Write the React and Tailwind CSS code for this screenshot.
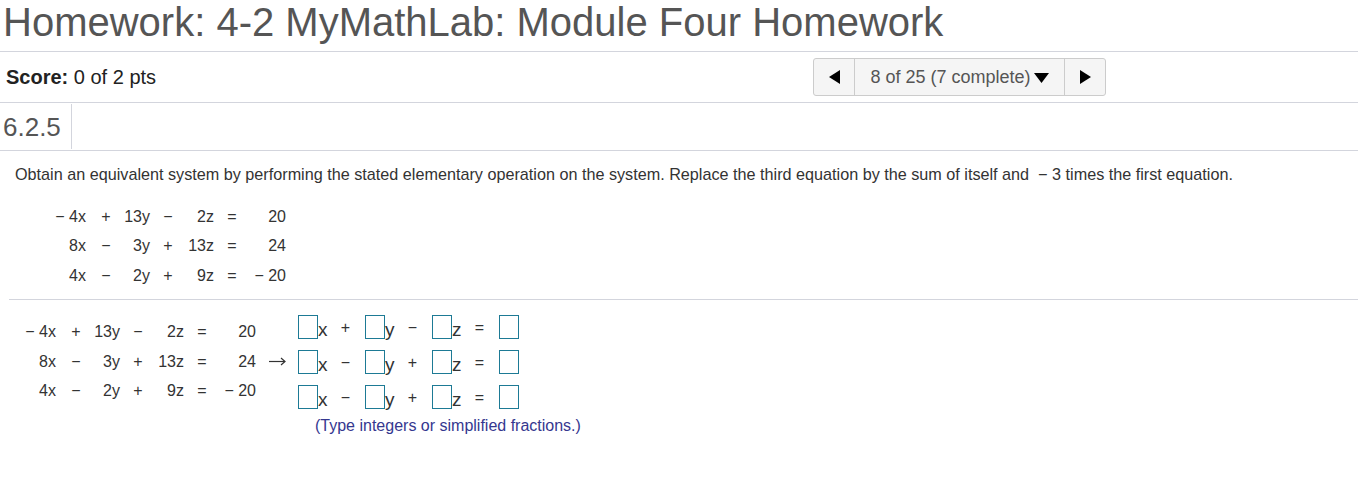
import React from "react";

const font = { fontFamily: '"Liberation Sans", Arial, sans-serif' };

const system = [
  ["− 4x", "+", "13y", "−", "2z", "=", "20"],
  ["8x", "−", "3y", "+", "13z", "=", "24"],
  ["4x", "−", "2y", "+", "9z", "=", "− 20"],
];

const answers = [
  ["+", "−"],
  ["−", "+"],
  ["−", "+"],
];

function EquationGrid({ className = "" }) {
  return (
    <div
      className={`grid grid-cols-[34px_40px_24px_36px_28px_36px_36px] auto-rows-[29.5px] items-center text-[16px] leading-[18px] text-[#333] ${className}`}
    >
      {system.map((row, r) =>
        row.map((cell, c) =>
          c % 2 === 0 ? (
            <div key={`${r}-${c}`} className="flex justify-end whitespace-nowrap">
              {cell}
            </div>
          ) : (
            <div key={`${r}-${c}`} className="text-center">
              {cell}
            </div>
          )
        )
      )}
    </div>
  );
}

function Box() {
  return <span className="block h-[24px] w-[20px] shrink-0 border border-[#1d7a95] bg-white" />;
}

function AnswerRow({ ops }) {
  return (
    <div className="flex h-[24px] items-end text-[#333]">
      <Box />
      <span className="w-[8px] text-[19px] leading-none">x</span>
      <span className="w-[39px] pb-[1px] text-center text-[16px] leading-[1.2]">{ops[0]}</span>
      <Box />
      <span className="w-[8px] text-[19px] leading-none">y</span>
      <span className="w-[39px] pb-[1px] text-center text-[16px] leading-[1.2]">{ops[1]}</span>
      <Box />
      <span className="w-[8px] text-[19px] leading-none">z</span>
      <span className="w-[39px] pb-[1px] text-center text-[16px] leading-[1.2]">=</span>
      <Box />
    </div>
  );
}

function Nav() {
  return (
    <div className="ml-auto mr-[252px] flex h-[38px] w-[293px] rounded-[3px] border border-[#ccc] bg-[#f5f5f5]">
      <div className="flex w-[41px] items-center justify-center border-r border-[#ccc]">
        <svg width="11" height="14" viewBox="0 0 11 14">
          <polygon points="11,0 11,14 0,7" fill="#000" />
        </svg>
      </div>
      <div className="flex flex-1 items-center justify-center gap-[3px] text-[18px] leading-none text-[#555]">
        <span>8 of 25 (7 complete)</span>
        <svg width="15" height="10" viewBox="0 0 15 10" className="mt-[2px]">
          <polygon points="0,0 15,0 7.5,10" fill="#000" />
        </svg>
      </div>
      <div className="flex w-[41px] items-center justify-center border-l border-[#ccc]">
        <svg width="11" height="14" viewBox="0 0 11 14">
          <polygon points="0,0 0,14 11,7" fill="#000" />
        </svg>
      </div>
    </div>
  );
}

function Arrow() {
  return (
    <div className="flex w-[42px] justify-center">
      <svg width="17" height="9" viewBox="0 0 17 9" fill="none" stroke="#333" strokeWidth="1.2">
        <path d="M0 4.5 H16" />
        <path d="M12 1 L16 4.5 L12 8" />
      </svg>
    </div>
  );
}

export default function App() {
  return (
    <div className="min-h-screen bg-white" style={font}>
      <div className="flex h-[52px] items-center border-b border-[#d3d5dd] pb-[8px] pl-[3px] text-[40px] leading-none text-[#555]">
        Homework: 4-2 MyMathLab: Module Four Homework
      </div>

      <div className="flex h-[51px] items-center border-b border-[#d3d5dd] pl-[6px] text-[20px] leading-none text-[#222]">
        <span>
          <span className="font-bold">Score:</span> 0 of 2 pts
        </span>
        <Nav />
      </div>

      <div className="flex h-[48px] items-stretch border-b border-[#d3d5dd]">
        <div className="my-[1px] flex w-[72px] items-center border-r border-[#d3d5dd] pl-[3px] text-[26px] leading-none text-[#555]">
          6.2.5
        </div>
      </div>

      <div className="pl-[9px]">
        <p className="pl-[6px] pt-[14px] text-[16.2px] leading-[18px] text-[#333]">
          Obtain an equivalent system by performing the stated elementary operation on the system. Replace the third
          equation by the sum of itself and{"\u00a0 "}−{"\u00a0"}3 times the first equation.
        </p>

        <EquationGrid className="ml-[43px] mt-[19px]" />

        <div className="mt-[8px] h-px bg-[#d3d5dd]" />

        <div className="ml-[13px] flex items-center pt-[15px]">
          <EquationGrid />
          <Arrow />
          <div className="flex flex-col gap-[11px]">
            {answers.map((ops, i) => (
              <AnswerRow key={i} ops={ops} />
            ))}
          </div>
        </div>

        <p className="ml-[306px] mt-[8px] text-[16px] leading-[18px] text-[#35378f]">
          (Type integers or simplified fractions.)
        </p>
      </div>
    </div>
  );
}
